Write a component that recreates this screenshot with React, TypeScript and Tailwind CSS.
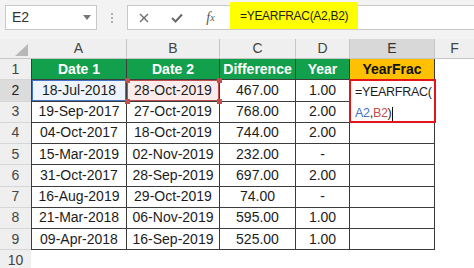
import React from "react"

const rows = [
  ["18-Jul-2018", "28-Oct-2019", "467.00", "1.00"],
  ["19-Sep-2017", "27-Oct-2019", "768.00", "2.00"],
  ["04-Oct-2017", "18-Oct-2019", "744.00", "2.00"],
  ["15-Mar-2019", "02-Nov-2019", "232.00", "-"],
  ["31-Oct-2017", "28-Sep-2019", "697.00", "2.00"],
  ["16-Aug-2019", "29-Oct-2019", "74.00", "-"],
  ["21-Mar-2018", "06-Nov-2019", "595.00", "1.00"],
  ["09-Apr-2018", "16-Sep-2019", "525.00", "1.00"],
]

const cell = "flex h-[21.25px] items-center justify-center border-r border-b border-[#3c3c3c]"

function Corner({ pos }: { pos: string }) {
  return <span className={`absolute size-[5px] bg-[#c0504d] ${pos}`} />
}

export default function App() {
  return (
    <div className="h-[268px] w-[474px] overflow-hidden bg-white font-['Liberation_Sans',Arial,sans-serif] text-[#1c1c1c]">
      {/* barra de fórmulas */}
      <div className="flex h-[39px] bg-[#f3f3f3] pt-[5px]">
        <div className="ml-[5px] flex h-[25px] w-[92px] items-center justify-between border border-[#c9c9c9] bg-white pl-[6px] pr-[5px] text-[14px] text-[#333]">
          <span>E2</span>
          <svg width="8" height="5" viewBox="0 0 8 5">
            <path d="M0 0h8L4 5z" fill="#777" />
          </svg>
        </div>
        <div className="flex h-[25px] w-[30px] flex-col items-center justify-center gap-[2px]">
          <span className="size-[2px] rounded-full bg-[#9a9a9a]" />
          <span className="size-[2px] rounded-full bg-[#9a9a9a]" />
          <span className="size-[2px] rounded-full bg-[#9a9a9a]" />
        </div>
        <div className="flex h-[25px] flex-1 items-stretch border border-r-0 border-[#c9c9c9] bg-white">
          <div className="flex w-[32px] items-center justify-center">
            <svg width="10" height="10" viewBox="0 0 10 10">
              <path d="M1 1l8 8M9 1l-8 8" stroke="#6a6a6a" strokeWidth="1.4" />
            </svg>
          </div>
          <div className="flex w-[34px] items-center justify-center">
            <svg width="12" height="10" viewBox="0 0 12 10">
              <path d="M1 5l3.5 3.5L11 1.5" stroke="#6a6a6a" strokeWidth="2" fill="none" />
            </svg>
          </div>
          <div className="flex w-[33px] items-center justify-center font-['Liberation_Serif',serif] text-[14px] italic text-[#555]">
            f<span className="text-[10px]">x</span>
          </div>
          <div className="ml-[3px] -mt-[4px] flex items-center bg-[#ffff00] px-[10px] text-[12px] tracking-[-0.3px] text-[#222]">
            =YEARFRAC(A2,B2)
          </div>
        </div>
      </div>

      {/* planilha */}
      <div className="flex">
        <div className="w-[31px] flex-none bg-[#efefef] text-[14px] text-[#444]">
          <div className="relative h-[20px] border-b border-[#c6c6c6]">
            <svg className="absolute right-[3px] bottom-[2px]" width="13" height="12" viewBox="0 0 13 12">
              <path d="M13 0V12H0z" fill="#b8b8b8" />
            </svg>
          </div>
          {[1, 2, 3, 4, 5, 6, 7, 8, 9, 10].map((n) => (
            <div
              key={n}
              className={`flex h-[21.25px] items-center justify-center border-b border-[#d6d6d6] ${n === 2 ? "bg-[#dcdcdc] text-[#222]" : ""}`}
            >
              {n}
            </div>
          ))}
        </div>

        <div className="flex-1">
          <div className="flex h-[20px] border-b border-[#c6c6c6] bg-[#efefef] text-[14px] text-[#444]">
            <div className="flex w-[96px] items-center justify-center border-r border-[#c6c6c6]">A</div>
            <div className="flex w-[93px] items-center justify-center border-r border-[#c6c6c6]">B</div>
            <div className="flex w-[76px] items-center justify-center border-r border-[#c6c6c6]">C</div>
            <div className="flex w-[54px] items-center justify-center border-r border-[#c6c6c6]">D</div>
            <div className="flex w-[85px] items-center justify-center border-r border-[#c6c6c6] bg-[#d8d8d8] text-[#333]">E</div>
            <div className="flex flex-1 items-center justify-center">F</div>
          </div>

          <div className="relative grid w-[404px] grid-cols-[96px_93px_76px_54px_85px] text-[14px]">
            <div className={`${cell} border-l bg-[#13a04c] font-bold text-white`}>Date 1</div>
            <div className={`${cell} bg-[#13a04c] font-bold text-white`}>Date 2</div>
            <div className={`${cell} bg-[#13a04c] font-bold text-white`}>Difference</div>
            <div className={`${cell} bg-[#13a04c] font-bold text-white`}>Year</div>
            <div className={`${cell} bg-[#ffc000] font-bold text-[#111]`}>YearFrac</div>

            {rows.map((r, i) => (
              <React.Fragment key={i}>
                <div
                  className={`${cell} border-l ${i === 0 ? "bg-[#eef4fb] shadow-[inset_0_0_0_1px_#4472c4]" : ""}`}
                >
                  {r[0]}
                </div>
                <div
                  className={`${cell} ${i === 0 ? "relative bg-[#fcebeb] shadow-[inset_0_0_0_1px_#c0504d]" : ""}`}
                >
                  {r[1]}
                  {i === 0 && (
                    <>
                      <Corner pos="-top-[2px] -left-[2px]" />
                      <Corner pos="-top-[2px] -right-[3px]" />
                      <Corner pos="-bottom-[3px] -left-[2px]" />
                      <Corner pos="-bottom-[3px] -right-[3px]" />
                    </>
                  )}
                </div>
                <div className={cell}>{r[2]}</div>
                <div className={cell}>{r[3]}</div>
                <div className={cell}></div>
              </React.Fragment>
            ))}

            {/* célula em edição */}
            <div className="absolute left-[318px] top-[20px] h-[44px] w-[87px] border-2 border-[#e3151b] bg-white pl-[4px] pt-[1px] text-[12.5px] leading-[21px] tracking-[-0.3px] text-[#1c1c1c]">
              <div>=YEARFRAC(</div>
              <div className="flex items-center">
                <span className="text-[#4472c4]">A2</span>,<span className="text-[#c0504d]">B2</span>)
                <span className="ml-[1px] h-[14px] w-[1px] bg-[#111]" />
              </div>
            </div>
          </div>
        </div>
      </div>
    </div>
  )
}
